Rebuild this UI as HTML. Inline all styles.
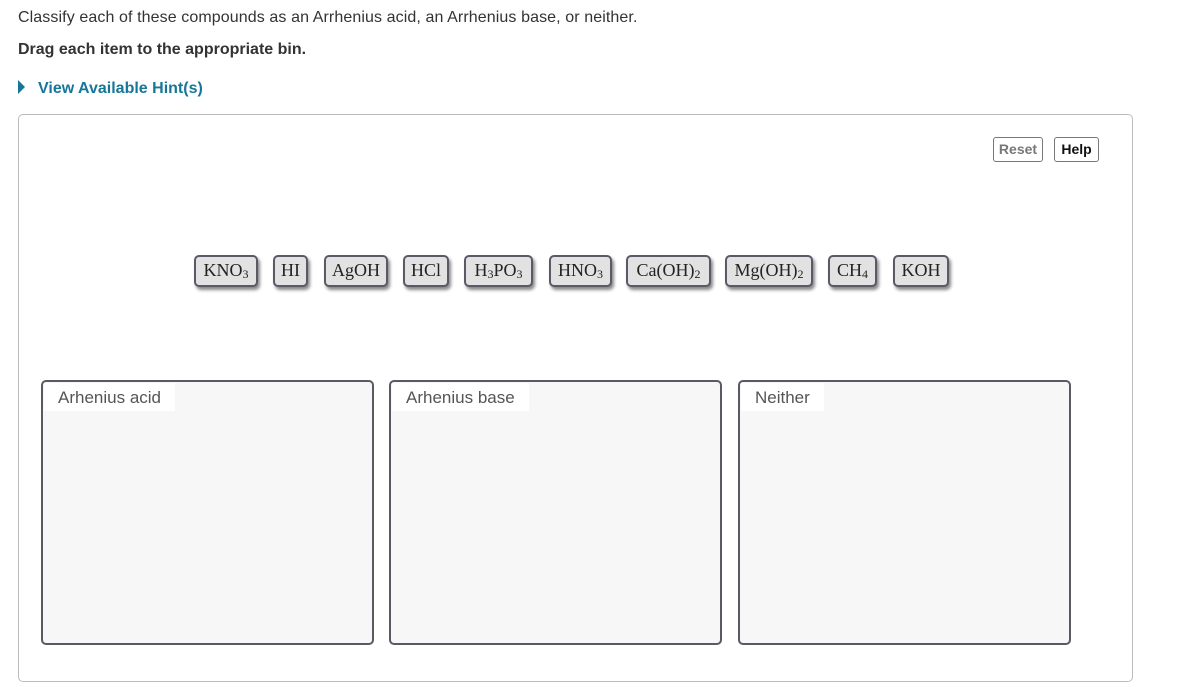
<!DOCTYPE html>
<html><head><style>
body{margin:0;width:1187px;height:687px;background:#fff;font-family:"Liberation Sans",Arial,sans-serif;position:relative;overflow:hidden}
.a{position:absolute}
.t{position:absolute;top:255px;height:32px;box-sizing:border-box;border:2px solid #5a5a66;border-radius:5px;background:#e2e2e2;box-shadow:2px 3px 3px #888;font-family:"Liberation Serif",serif;font-size:18px;color:#222;text-align:center;line-height:27px}
.t sub{font-size:12px;vertical-align:-2px;line-height:0}
.bin{position:absolute;top:380px;height:265px;width:333px;box-sizing:border-box;border:2px solid #5a5a66;border-radius:5px;background:#f7f7f8}
.bin span{position:absolute;left:1px;top:1px;background:#fff;padding:5px 14px 0 14px;height:23px;font-size:17px;color:#555}
.btn{position:absolute;top:137px;height:25px;box-sizing:border-box;border:1px solid #777;border-radius:3px;font-size:14px;font-weight:bold;line-height:23px;text-align:center}
</style></head><body>
<div class="a" style="left:18px;top:9px;font-size:16px;color:#333;letter-spacing:0.1px">Classify each of these compounds as an Arrhenius acid, an Arrhenius base, or neither.</div>
<div class="a" style="left:18px;top:41px;font-size:16px;font-weight:bold;color:#333">Drag each item to the appropriate bin.</div>
<div class="a" style="left:18px;top:80px;width:0;height:0;border-left:7px solid #16769a;border-top:7px solid transparent;border-bottom:7px solid transparent"></div>
<div class="a" style="left:38px;top:80px;font-size:16px;font-weight:bold;color:#16769a">View Available Hint(s)</div>
<div class="a" style="left:18px;top:114px;width:1115px;height:568px;box-sizing:border-box;border:1px solid #bbb;border-radius:5px"></div>
<div class="btn" style="left:993px;width:50px;color:#777">Reset</div>
<div class="btn" style="left:1054px;width:45px;color:#111">Help</div>
<div class="t" style="left:194px;width:64px">KNO<sub>3</sub></div>
<div class="t" style="left:273px;width:35px">HI</div>
<div class="t" style="left:324px;width:64px">AgOH</div>
<div class="t" style="left:403px;width:46px">HCl</div>
<div class="t" style="left:464px;width:69px">H<sub>3</sub>PO<sub>3</sub></div>
<div class="t" style="left:549px;width:63px">HNO<sub>3</sub></div>
<div class="t" style="left:626px;width:85px">Ca(OH)<sub>2</sub></div>
<div class="t" style="left:725px;width:88px">Mg(OH)<sub>2</sub></div>
<div class="t" style="left:828px;width:49px">CH<sub>4</sub></div>
<div class="t" style="left:893px;width:56px">KOH</div>
<div class="bin" style="left:41px"><span>Arhenius acid</span></div>
<div class="bin" style="left:389px"><span>Arhenius base</span></div>
<div class="bin" style="left:738px"><span>Neither</span></div>
</body></html>
